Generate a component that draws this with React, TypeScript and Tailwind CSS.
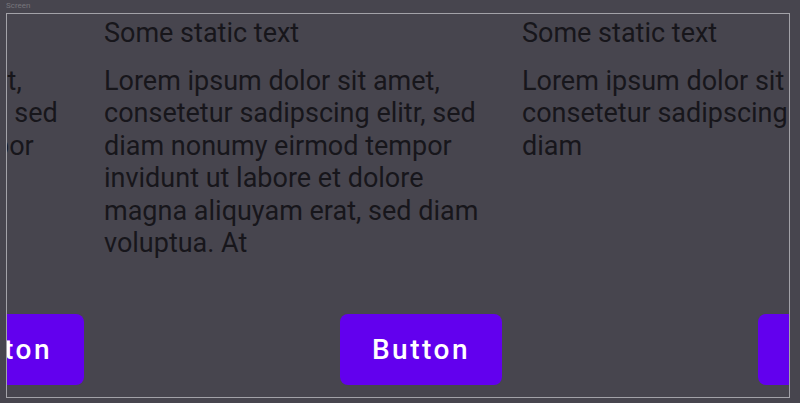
const pages = [
  "Lorem ipsum dolor sit amet, consetetur sadipscing elitr, sed diam nonumy eirmod tempor",
  "Lorem ipsum dolor sit amet, consetetur sadipscing elitr, sed diam nonumy eirmod tempor invidunt ut labore et dolore magna aliquyam erat, sed diam voluptua. At",
  "Lorem ipsum dolor sit amet, consetetur sadipscing elitr, sed diam",
];

function Page({ body }: { body: string }) {
  return (
    <div className="flex h-full w-[418px] shrink-0 flex-col px-[10px] pt-[3px] pb-[12px] text-[#17161b]">
      <p className="text-[27px] leading-[32px]">Some static text</p>
      <p className="mt-[16px] text-[27px] leading-[32.4px]">{body}</p>
      <button className="mt-auto flex h-[71px] w-[162px] shrink-0 items-center justify-center self-end rounded-lg bg-[#6200ee] text-[28px] font-medium tracking-[0.09em] text-white">
        Button
      </button>
    </div>
  );
}

export default function App() {
  return (
    <div className="flex h-[403px] w-[800px] flex-col bg-[#47454e] font-['Roboto',sans-serif]">
      <div className="h-[13px] pl-[6px] text-[8px] leading-[11px] text-[#77767c]">Screen</div>
      <div className="ml-[6px] h-[385px] w-[784px] overflow-hidden border border-[#a3a2a8]">
        <div className="ml-[-331px] flex h-full">
          {pages.map((body, i) => (
            <Page key={i} body={body} />
          ))}
        </div>
      </div>
    </div>
  );
}
